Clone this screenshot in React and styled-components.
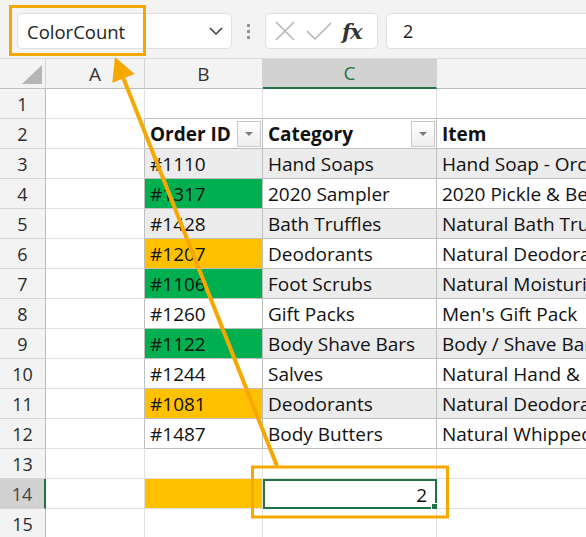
import React from 'react';
import styled, { createGlobalStyle } from 'styled-components';

const GlobalStyle = createGlobalStyle`
  html, body {
    margin: 0;
    padding: 0;
    background: #ffffff;
  }
  body {
    font-family: "Open Sans", "Liberation Sans", sans-serif;
    overflow: hidden;
  }
`;

const ORANGE = '#f7a800';
const GREEN = '#217346';

const Page = styled.div`
  position: relative;
  width: 586px;
  height: 537px;
  overflow: hidden;
  background: #ffffff;
`;

const TopBar = styled.div`
  height: 58px;
  background: #f3f3f3;
  border-bottom: 1px solid #dcdcdc;
  display: flex;
  align-items: center;
  padding-left: 17px;
`;

const NameBox = styled.div`
  width: 196px;
  height: 34px;
  background: #ffffff;
  border: 1px solid #e0e0e0;
  border-radius: 5px;
  display: flex;
  align-items: center;
  justify-content: space-between;
  padding: 0 8px 0 9px;
  box-sizing: content-box;
  margin-top: 4px;
  font-size: 18.5px;
  color: #222;
`;

const Dots = styled.div`
  width: 33px;
  display: flex;
  flex-direction: column;
  align-items: center;
  gap: 3px;
  margin-top: 4px;
  span {
    width: 3px;
    height: 3px;
    background: #8a8a8a;
    border-radius: 1px;
  }
`;

const FxBox = styled.div`
  width: 103px;
  height: 34px;
  background: #ffffff;
  border: 1px solid #e0e0e0;
  border-radius: 5px;
  display: flex;
  align-items: center;
  margin-top: 4px;
  padding-left: 8px;
  gap: 10px;
`;

const FxText = styled.span`
  font-family: "DejaVu Serif", "Liberation Serif", serif;
  font-style: italic;
  font-weight: bold;
  font-size: 21px;
  color: #333;
  letter-spacing: -1px;
`;

const Formula = styled.div`
  flex: 1;
  height: 34px;
  margin-left: 8px;
  margin-top: 4px;
  background: #ffffff;
  border: 1px solid #e0e0e0;
  border-right: none;
  border-radius: 5px 0 0 5px;
  display: flex;
  align-items: center;
  padding-left: 16px;
  font-size: 18px;
  color: #222;
`;

const Grid = styled.div`
  display: grid;
  grid-template-columns: 46px 99px 118px 174px 300px;
  grid-auto-rows: 30px;
`;

const HeadCell = styled.div`
  background: ${({ $active }) => ($active ? '#d2d2d2' : '#f3f3f3')};
  border-right: 1px solid #d4d4d4;
  border-bottom: ${({ $active }) => ($active ? `2px solid ${GREEN}` : '1px solid #bdbdbd')};
  display: flex;
  align-items: center;
  justify-content: center;
  font-size: 19px;
  color: ${({ $active }) => ($active ? GREEN : '#333')};
  position: relative;
  box-sizing: border-box;
`;

const Corner = styled(HeadCell)`
  align-items: flex-end;
  justify-content: flex-end;
  padding: 0 3px 4px 0;
`;

const RowHead = styled.div`
  background: ${({ $active }) => ($active ? '#d2d2d2' : '#f3f3f3')};
  border-right: ${({ $active }) => ($active ? `2px solid ${GREEN}` : '1px solid #bdbdbd')};
  border-bottom: 1px solid #d4d4d4;
  display: flex;
  align-items: center;
  justify-content: center;
  font-size: 18px;
  color: ${({ $active }) => ($active ? '#444' : '#2b2b2b')};
  box-sizing: border-box;
`;

const Cell = styled.div`
  background: ${({ $fill }) => $fill || '#ffffff'};
  border-right: 1px solid ${({ $edgeR }) => ($edgeR ? '#bfbfbf' : '#e1e1e1')};
  border-bottom: 1px solid ${({ $edgeB }) => ($edgeB ? '#bfbfbf' : '#e1e1e1')};
  box-sizing: border-box;
  display: flex;
  align-items: center;
  justify-content: ${({ $right }) => ($right ? 'flex-end' : 'space-between')};
  padding: ${({ $right }) => ($right ? '0 8px 0 5px' : '0 1px 0 5px')};
  font-size: 19px;
  font-weight: ${({ $bold }) => ($bold ? 700 : 400)};
  color: #111;
  white-space: nowrap;
  overflow: hidden;
  position: relative;
`;

const Selected = styled(Cell)`
  border: 2px solid ${GREEN};
  padding-top: 2px;
  overflow: visible;
`;

const Handle = styled.span`
  position: absolute;
  right: -4px;
  bottom: -4px;
  width: 6px;
  height: 6px;
  background: ${GREEN};
  border: 1px solid #ffffff;
`;

const FilterBtn = styled.span`
  flex: none;
  width: 22px;
  height: 24px;
  border: 1px solid #c8c8c8;
  background: linear-gradient(#ffffff, #eeeeee);
  display: flex;
  align-items: center;
  justify-content: center;
  &::after {
    content: '';
    border-left: 4px solid transparent;
    border-right: 4px solid transparent;
    border-top: 4px solid #7a7a7a;
  }
`;

const Overlay = styled.svg`
  position: absolute;
  left: 0;
  top: 0;
  pointer-events: none;
`;

const GREEN_FILL = '#00b050';
const ORANGE_FILL = '#ffc000';
const BAND = '#ececec';

const rows = [
  ['#1110', 'Hand Soaps', 'Hand Soap - Orchard Blossom', null],
  ['#1317', '2020 Sampler', '2020 Pickle & Beer Sampler', GREEN_FILL],
  ['#1428', 'Bath Truffles', 'Natural Bath Truffles', null],
  ['#1207', 'Deodorants', 'Natural Deodorant', ORANGE_FILL],
  ['#1106', 'Foot Scrubs', 'Natural Moisturizing Foot Scrub', GREEN_FILL],
  ['#1260', 'Gift Packs', "Men's Gift Pack", null],
  ['#1122', 'Body Shave Bars', 'Body / Shave Bar', GREEN_FILL],
  ['#1244', 'Salves', 'Natural Hand & Body Salve', null],
  ['#1081', 'Deodorants', 'Natural Deodorant', ORANGE_FILL],
  ['#1487', 'Body Butters', 'Natural Whipped Body Butter', null],
];

const Chevron = () => (
  <svg width="14" height="8" viewBox="0 0 14 8">
    <path d="M1 1 L7 7 L13 1" fill="none" stroke="#444" strokeWidth="1.6" />
  </svg>
);

const Cross = () => (
  <svg width="22" height="22" viewBox="0 0 22 22">
    <path d="M2 2 L20 20 M20 2 L2 20" stroke="#b4b4b4" strokeWidth="1.5" />
  </svg>
);

const Check = () => (
  <svg width="26" height="20" viewBox="0 0 26 20">
    <path d="M1 10 L9 18 L25 2" fill="none" stroke="#b4b4b4" strokeWidth="1.5" />
  </svg>
);

const Arrow = () => {
  const tip = [115, 57];
  const tail = [277, 466];
  const dx = tail[0] - tip[0];
  const dy = tail[1] - tip[1];
  const len = Math.hypot(dx, dy);
  const ux = dx / len;
  const uy = dy / len;
  const bx = tip[0] + ux * 23;
  const by = tip[1] + uy * 23;
  const px = uy * 12;
  const py = -ux * 12;
  return (
    <Overlay width="586" height="537" viewBox="0 0 586 537">
      <rect x="10.5" y="6.5" width="134" height="48" fill="none" stroke={ORANGE} strokeWidth="3" />
      <rect x="252.5" y="467" width="195" height="50" fill="none" stroke={ORANGE} strokeWidth="3" />
      <line x1={bx} y1={by} x2={tail[0]} y2={tail[1]} stroke={ORANGE} strokeWidth="4" />
      <polygon
        points={`${tip[0]},${tip[1]} ${bx + px},${by + py} ${bx - px},${by - py}`}
        fill={ORANGE}
      />
    </Overlay>
  );
};

const App = () => {
  const cols = ['A', 'B', 'C', 'D'];
  return (
    <Page>
      <GlobalStyle />
      <TopBar>
        <NameBox>
          <span>ColorCount</span>
          <Chevron />
        </NameBox>
        <Dots>
          <span />
          <span />
          <span />
        </Dots>
        <FxBox>
          <Cross />
          <Check />
          <FxText>fx</FxText>
        </FxBox>
        <Formula>2</Formula>
      </TopBar>
      <Grid>
        <Corner>
          <svg width="20" height="19" viewBox="0 0 20 19">
            <polygon points="20,0 20,19 0,19" fill="#b5b5b5" />
          </svg>
        </Corner>
        {cols.map((c) => (
          <HeadCell key={c} $active={c === 'C'}>
            {c === 'D' ? '' : c}
          </HeadCell>
        ))}

        <RowHead>1</RowHead>
        <Cell />
        <Cell $edgeB />
        <Cell $edgeB />
        <Cell $edgeB />

        <RowHead>2</RowHead>
        <Cell $edgeR />
        <Cell $edgeR $edgeB $bold>
          Order ID
          <FilterBtn />
        </Cell>
        <Cell $edgeR $edgeB $bold>
          Category
          <FilterBtn />
        </Cell>
        <Cell $edgeR $edgeB $bold>
          Item
        </Cell>

        {rows.map(([id, cat, item, fill], i) => {
          const band = i % 2 === 0 ? BAND : null;
          return (
            <React.Fragment key={id + i}>
              <RowHead>{i + 3}</RowHead>
              <Cell $edgeR />
              <Cell $edgeR $edgeB $fill={fill || band}>
                {id}
              </Cell>
              <Cell $edgeR $edgeB $fill={band}>
                {cat}
              </Cell>
              <Cell $edgeR $edgeB $fill={band}>
                {item}
              </Cell>
            </React.Fragment>
          );
        })}

        <RowHead>13</RowHead>
        <Cell />
        <Cell />
        <Cell />
        <Cell />

        <RowHead $active>14</RowHead>
        <Cell />
        <Cell $fill={ORANGE_FILL} />
        <Selected $right>
          2
          <Handle />
        </Selected>
        <Cell />

        <RowHead>15</RowHead>
        <Cell />
        <Cell />
        <Cell />
        <Cell />
      </Grid>
      <Arrow />
    </Page>
  );
};

export default App;
